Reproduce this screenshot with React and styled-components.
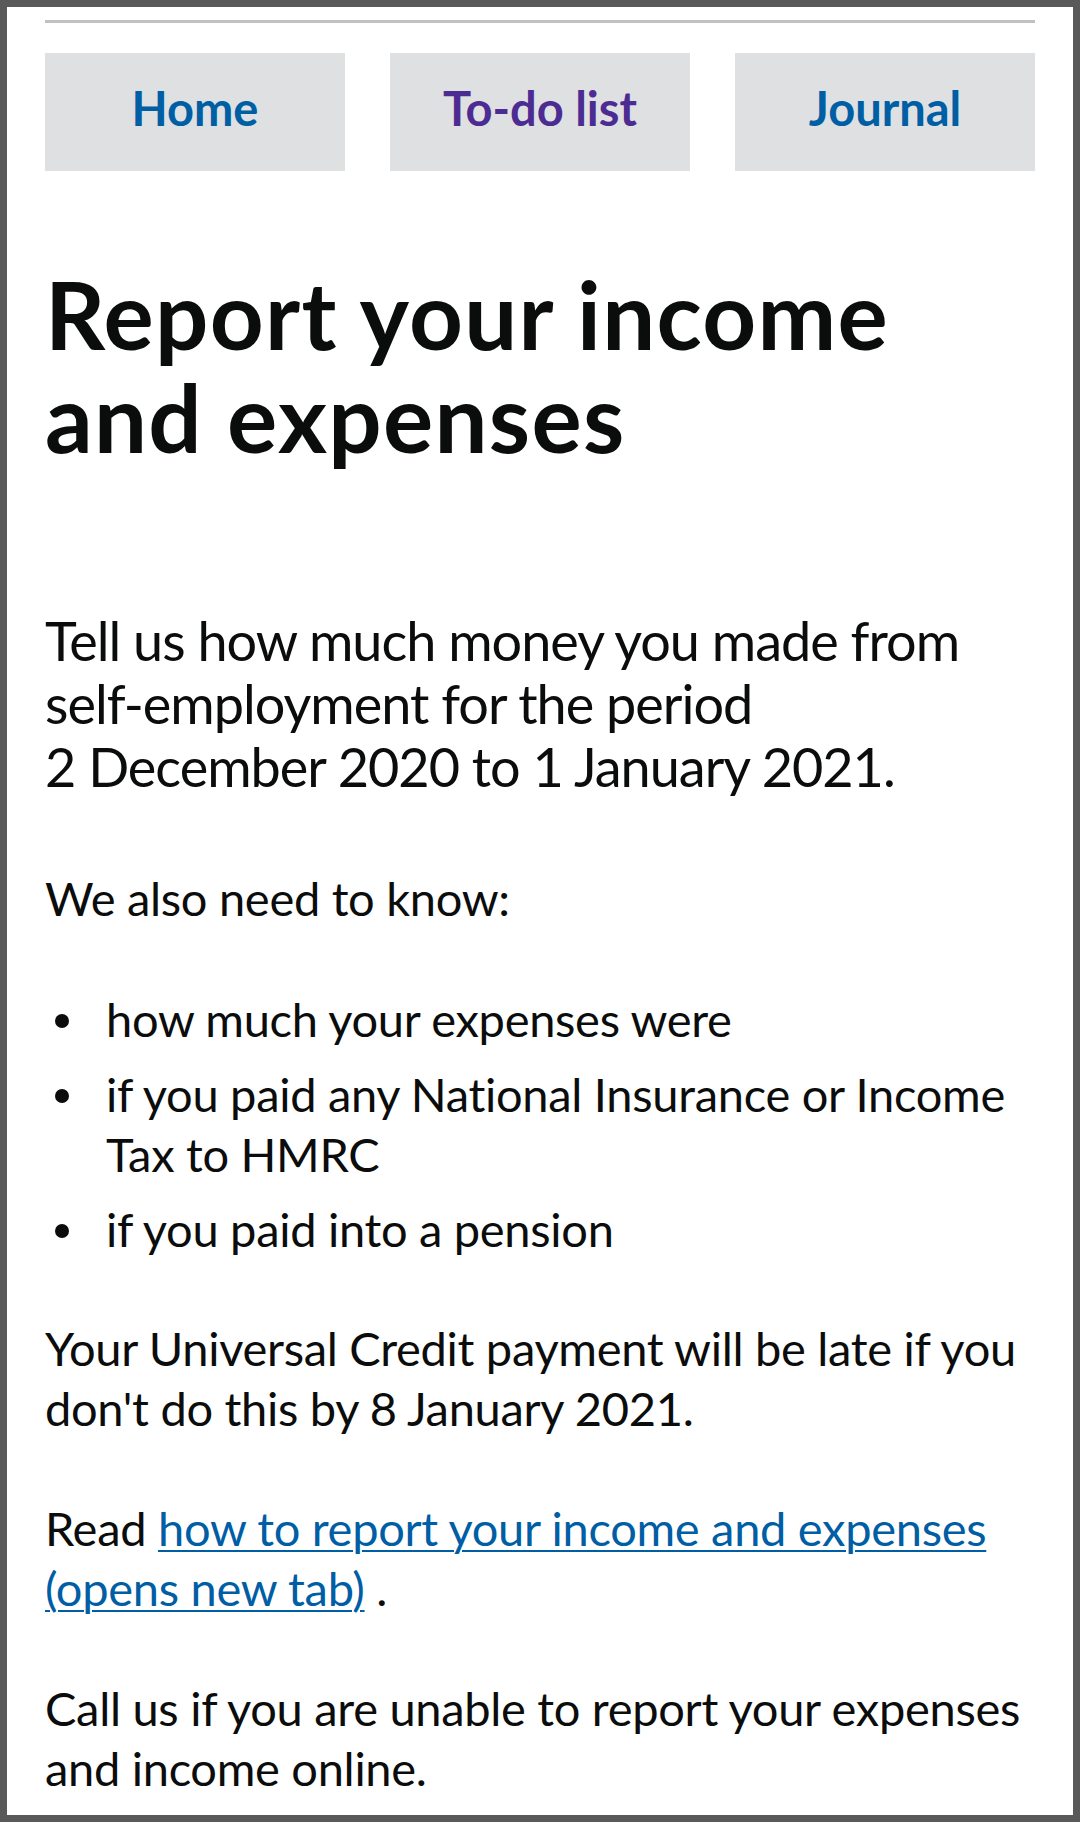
import styled, { createGlobalStyle } from 'styled-components';

const GlobalStyle = createGlobalStyle`
	body {
		margin: 0;
		background: #595959;
		font-family: Lato, 'Liberation Sans', sans-serif;
		color: #0b0c0c;
	}
`;

const Page = styled.div`
	box-sizing: border-box;
	min-height: 1822px;
	border: 7px solid #595959;
	background: #fff;
	padding: 13px 38px 0;
`;

const Rule = styled.div`
	height: 3px;
	background: #bfc1c3;
`;

const Nav = styled.nav`
	display: grid;
	grid-template-columns: repeat(3, 1fr);
	gap: 45px;
	margin-top: 30px;
`;

const NavItem = styled.a`
	display: flex;
	align-items: center;
	justify-content: center;
	box-sizing: border-box;
	height: 118px;
	padding-bottom: 9px;
	background: #dee0e2;
	font-size: 47px;
	font-weight: 700;
	text-decoration: none;
	color: ${(props) => (props.visited ? '#4c2c92' : '#005ea5')};
`;

const Title = styled.h1`
	margin: 91px 0 0;
	font-size: 94px;
	line-height: 103px;
	font-weight: 700;
	letter-spacing: 1.3px;
`;

const Lead = styled.p`
	margin: 141px 0 0;
	font-size: 54px;
	line-height: 63px;
	letter-spacing: -1px;
`;

const Body = styled.p`
	margin: ${(props) => props.gap || 60}px 0 0;
	font-size: 47px;
	line-height: 60px;
	letter-spacing: -0.3px;
`;

const List = styled.ul`
	list-style: none;
	margin: 61px 0 0;
	padding: 0 0 0 61px;
`;

const Item = styled.li`
	position: relative;
	font-size: 47px;
	line-height: 60px;
	letter-spacing: -0.3px;
	margin-bottom: 15px;

	&:last-child {
		margin-bottom: 0;
	}

	&::before {
		content: '';
		position: absolute;
		left: -51px;
		top: 25px;
		width: 14px;
		height: 14px;
		border-radius: 50%;
		background: #0b0c0c;
	}
`;

const Link = styled.a`
	color: #005ea5;
	text-decoration: underline;
	text-decoration-thickness: 2px;
	text-underline-offset: 4px;
`;

const App = () => {
	return (
		<>
			<GlobalStyle />
			<Page>
				<Rule />
				<Nav>
					<NavItem href="#">Home</NavItem>
					<NavItem href="#" visited>
						To-do list
					</NavItem>
					<NavItem href="#">Journal</NavItem>
				</Nav>
				<Title>Report your income and expenses</Title>
				<Lead>
					Tell us how much money you made from self-employment for the period
					<br />2 December 2020 to 1 January 2021.
				</Lead>
				<Body gap={70}>We also need to know:</Body>
				<List>
					<Item>how much your expenses were</Item>
					<Item>if you paid any National Insurance or Income Tax to HMRC</Item>
					<Item>if you paid into a pension</Item>
				</List>
				<Body gap={59}>
					Your Universal Credit payment will be late if you don't do this by 8 January 2021.
				</Body>
				<Body>
					Read <Link href="#">how to report your income and expenses (opens new tab)</Link> .
				</Body>
				<Body>Call us if you are unable to report your expenses and income online.</Body>
			</Page>
		</>
	);
};

export default App;
